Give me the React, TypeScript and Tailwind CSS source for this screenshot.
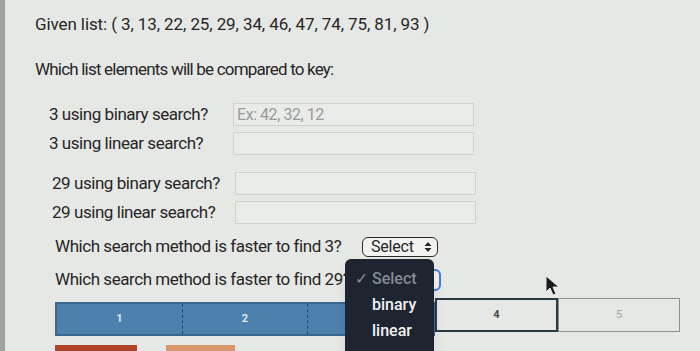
const rowsA = ["3 using binary search?", "3 using linear search?"];
const rowsB = ["29 using binary search?", "29 using linear search?"];

function AnswerRow({ label, placeholder, inputLeft }: { label: string; placeholder?: string; inputLeft: string }) {
    return (
        <div className="flex items-center h-[29px]">
            <span className={inputLeft}>{label}</span>
            <div className="w-[241px] h-[23px] border border-[#cfd3cf] bg-[#e9ebe8] flex items-center pl-[3px] text-[#9a9c9a] text-[16px]">
                {placeholder}
            </div>
        </div>
    );
}

// little up/down triangles like the native select
function UpDown() {
    return (
        <svg width="8" height="12" viewBox="0 0 8 12">
            <path d="M4 1 L7.5 5 L0.5 5 Z" fill="#262626" />
            <path d="M4 11 L7.5 7 L0.5 7 Z" fill="#262626" />
        </svg>
    );
}

export default function App() {
    return (
        <div className="relative w-[700px] h-[351px] overflow-hidden bg-[#e6e8e5] border-l-[5px] border-[#9fa19f] font-['Roboto',sans-serif] text-[17px] text-[#262626] tracking-[-0.45px]">
            <div className="flex flex-col pl-[30px] pt-[14px]">
                <p className="leading-[20px] tracking-[-0.1px]">Given list: ( 3, 13, 22, 25, 29, 34, 46, 47, 74, 75, 81, 93 )</p>
                <p className="leading-[20px] mt-[25px] tracking-[-0.8px]">Which list elements will be compared to key:</p>

                {/* first key */}
                <div className="mt-[21px] ml-[14px] flex flex-col">
                    {rowsA.map((r, i) => (
                        <AnswerRow key={r} label={r} placeholder={i === 0 ? "Ex: 42, 32, 12" : undefined} inputLeft="w-[184px]" />
                    ))}
                </div>

                {/* second key */}
                <div className="mt-[11px] ml-[17px] flex flex-col">
                    {rowsB.map((r) => (
                        <AnswerRow key={r} label={r} inputLeft="w-[183px]" />
                    ))}
                </div>

                <div className="mt-[8px] ml-[20px] flex items-center h-[24px]">
                    <span className="w-[307px]">Which search method is faster to find 3?</span>
                    <div className="h-[20px] w-[76px] rounded-[6px] border-[1.5px] border-[#2a2a2a] bg-[#f2f3f1] flex items-center justify-between pl-[8px] pr-[5px] text-[16px] tracking-[-0.2px]">
                        Select
                        <UpDown />
                    </div>
                </div>

                <div className="mt-[9px] ml-[20px] flex items-center h-[24px]">
                    <span className="w-[290px] whitespace-nowrap">Which search method is faster to find 29?</span>
                    <div className="relative h-[22px] w-[96px] rounded-[6px] border-[2px] border-[#3d7be0] bg-[#f2f3f1]">
                        <div className="absolute left-[-2px] top-[-12px] w-[89px] h-[100px] rounded-[6px] bg-[#1f2530] shadow-lg flex flex-col pt-[7px] text-[16px] tracking-normal">
                            <div className="h-[26px] flex items-center pl-[10px] text-[#858b93] font-medium">
                                <span className="w-[17px]">✓</span>Select
                            </div>
                            <div className="h-[26px] flex items-center pl-[27px] text-[#f2f2f2] font-medium">binary</div>
                            <div className="h-[26px] flex items-center pl-[27px] text-[#f2f2f2] font-medium">linear</div>
                        </div>
                    </div>
                </div>

                {/* progress bar */}
                <div className="mt-[10px] ml-[20px] flex items-stretch h-[34px] text-[11px] font-bold tracking-normal">
                    <div className="w-[380px] flex bg-[#4c80ad] border-2 border-[#3a678e] text-[#dfe8f0]">
                        <div className="flex-1 flex items-center justify-center">1</div>
                        <div className="w-0 border-l border-dashed border-[#24496a]" />
                        <div className="flex-1 flex items-center justify-center">2</div>
                        <div className="w-0 border-l border-dashed border-[#24496a]" />
                        <div className="flex-1 flex items-center justify-center">3</div>
                    </div>
                    <div className="w-[123px] -mt-[4px] mb-[4px] border-2 border-[#2c3a44] flex items-center justify-center text-[#4a4a4a]">4</div>
                    <div className="w-[122px] -mt-[4px] mb-[4px] border border-[#8d908d] flex items-center justify-center text-[#a3a6a3] font-normal">5</div>
                </div>

                <div className="mt-[9px] ml-[20px] flex gap-[29px]">
                    <div className="w-[82px] h-[6px] bg-[#b0452a]" />
                    <div className="w-[69px] h-[6px] bg-[#d9966b]" />
                </div>
            </div>

            {/* mouse cursor */}
            <svg className="absolute left-[540px] top-[275px]" width="16" height="22" viewBox="0 0 16 22">
                <path d="M1 1 L1 17 L5 13 L8 20 L11 19 L8 12 L14 12 Z" fill="#1a1a1a" stroke="#e6e8e5" strokeWidth="1" />
            </svg>
        </div>
    );
}
